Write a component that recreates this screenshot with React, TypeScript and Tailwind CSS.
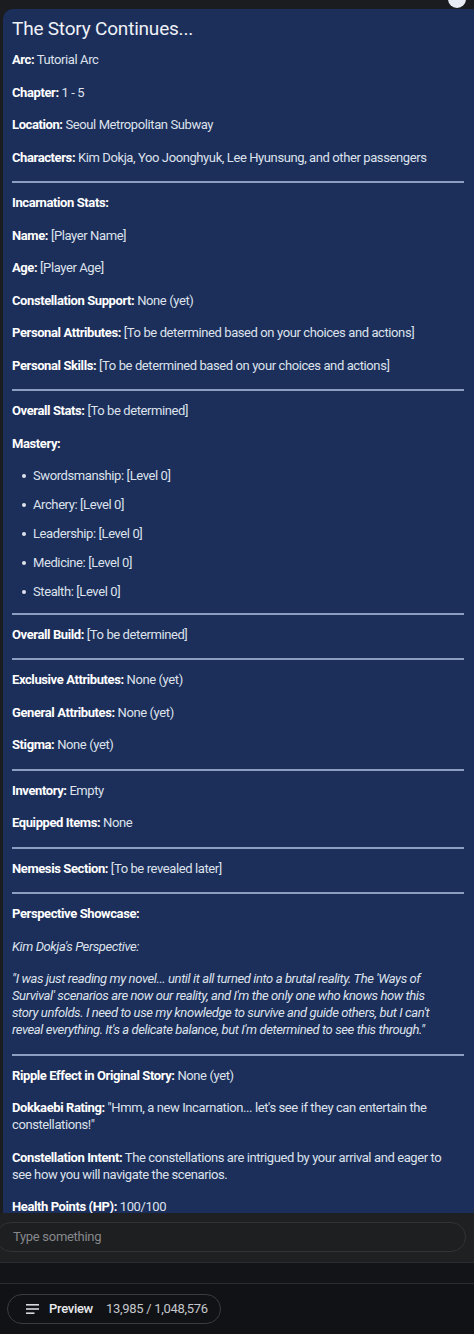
import React from 'react';

type Row =
  | { kind: 'p'; label?: string; text?: string }
  | { kind: 'hr' }
  | { kind: 'list'; items: string[] }
  | { kind: 'em'; text: string };

const rows: Row[] = [
  { kind: 'p', label: 'Arc:', text: 'Tutorial Arc' },
  { kind: 'p', label: 'Chapter:', text: '1 - 5' },
  { kind: 'p', label: 'Location:', text: 'Seoul Metropolitan Subway' },
  { kind: 'p', label: 'Characters:', text: 'Kim Dokja, Yoo Joonghyuk, Lee Hyunsung, and other passengers' },
  { kind: 'hr' },
  { kind: 'p', label: 'Incarnation Stats:' },
  { kind: 'p', label: 'Name:', text: '[Player Name]' },
  { kind: 'p', label: 'Age:', text: '[Player Age]' },
  { kind: 'p', label: 'Constellation Support:', text: 'None (yet)' },
  { kind: 'p', label: 'Personal Attributes:', text: '[To be determined based on your choices and actions]' },
  { kind: 'p', label: 'Personal Skills:', text: '[To be determined based on your choices and actions]' },
  { kind: 'hr' },
  { kind: 'p', label: 'Overall Stats:', text: '[To be determined]' },
  { kind: 'p', label: 'Mastery:' },
  {
    kind: 'list',
    items: [
      'Swordsmanship: [Level 0]',
      'Archery: [Level 0]',
      'Leadership: [Level 0]',
      'Medicine: [Level 0]',
      'Stealth: [Level 0]',
    ],
  },
  { kind: 'hr' },
  { kind: 'p', label: 'Overall Build:', text: '[To be determined]' },
  { kind: 'hr' },
  { kind: 'p', label: 'Exclusive Attributes:', text: 'None (yet)' },
  { kind: 'p', label: 'General Attributes:', text: 'None (yet)' },
  { kind: 'p', label: 'Stigma:', text: 'None (yet)' },
  { kind: 'hr' },
  { kind: 'p', label: 'Inventory:', text: 'Empty' },
  { kind: 'p', label: 'Equipped Items:', text: 'None' },
  { kind: 'hr' },
  { kind: 'p', label: 'Nemesis Section:', text: '[To be revealed later]' },
  { kind: 'hr' },
  { kind: 'p', label: 'Perspective Showcase:' },
  { kind: 'em', text: "Kim Dokja's Perspective:" },
  {
    kind: 'em',
    text: "\"I was just reading my novel... until it all turned into a brutal reality. The 'Ways of Survival' scenarios are now our reality, and I'm the only one who knows how this story unfolds. I need to use my knowledge to survive and guide others, but I can't reveal everything. It's a delicate balance, but I'm determined to see this through.\"",
  },
  { kind: 'hr' },
  { kind: 'p', label: 'Ripple Effect in Original Story:', text: 'None (yet)' },
  { kind: 'p', label: 'Dokkaebi Rating:', text: '"Hmm, a new Incarnation... let\'s see if they can entertain the constellations!"' },
  { kind: 'p', label: 'Constellation Intent:', text: 'The constellations are intrigued by your arrival and eager to see how you will navigate the scenarios.' },
  { kind: 'p', label: 'Health Points (HP):', text: '100/100' },
];

function Block({ row }: { row: Row }) {
  if (row.kind === 'hr') {
    return <hr className="border-0 h-[2px] bg-[#8c9fc2] mb-[11px] mr-[-12px]" />;
  }
  if (row.kind === 'list') {
    return (
      <ul className="flex flex-col gap-[12px] pl-[10px] mb-[12.5px]">
        {row.items.map((it) => (
          <li key={it} className="flex items-center gap-[7px]">
            <span className="w-[4px] h-[4px] rounded-full bg-[#dfe3ec]" />
            <span>{it}</span>
          </li>
        ))}
      </ul>
    );
  }
  if (row.kind === 'em') {
    return <p className="italic mb-[15.5px]">{row.text}</p>;
  }
  return (
    <p className="mb-[15.5px]">
      {row.label && <strong className="font-bold text-white">{row.label}</strong>}
      {row.text && <> {row.text}</>}
    </p>
  );
}

export default function App() {
  return (
    <div
      className="relative w-[474px] h-[1334px] overflow-hidden bg-[#1b1c1f] flex flex-col"
      style={{ fontFamily: 'Roboto, "Liberation Sans", sans-serif' }}
    >
      <div className="absolute top-[-10px] right-[8px] w-[18px] h-[18px] rounded-full bg-[#e8ecf5]" />

      <div className="h-[9px] shrink-0" />

      <div className="h-[1204px] shrink-0 overflow-hidden pl-[3px]">
        <div className="bg-[#1c2e5a] rounded-t-[10px] mr-[-8px] pl-[9px] pr-[30px] pt-[8px] pb-8 text-[13px] leading-[17px] tracking-[-0.4px] text-[#dde2ec]">
          <h1 className="text-[19px] leading-[24px] tracking-[-0.2px] text-[#eef1f7] mb-[10px]">The Story Continues...</h1>
          {rows.map((r, i) => (
            <Block key={i} row={r} />
          ))}
        </div>
      </div>

      <div className="h-[49px] shrink-0 bg-[#1f2022] pt-[9px] pr-[8px]">
        <div className="h-[30px] rounded-full border border-[#323336] bg-[#1e1f21] ml-[-4px] flex items-center pl-[16px] text-[13px] tracking-[-0.3px] text-[#86888c] whitespace-nowrap">
          Type something
        </div>
      </div>

      <div className="h-[21px] shrink-0 bg-[#131417] border-t border-[#2a2b2e]" />

      <div className="flex-1 bg-[#111215] border-t border-[#2c2d30] pt-[10px] pl-[7px]">
        <div className="flex items-center h-[30px] w-[214px] rounded-full border border-[#3b3c40] pl-[18px] whitespace-nowrap">
          <svg width="13" height="10" viewBox="0 0 13 10" className="mr-[10px] shrink-0">
            <rect x="0" y="0" width="13" height="1.6" fill="#d6d8dc" />
            <rect x="0" y="4.2" width="13" height="1.6" fill="#d6d8dc" />
            <rect x="0" y="8.4" width="8.5" height="1.6" fill="#d6d8dc" />
          </svg>
          <span className="text-[13px] tracking-[-0.3px] font-medium text-[#e8eaed] mr-[13px]">Preview</span>
          <span className="text-[13px] tracking-[-0.3px] text-[#c4c7cc]">13,985 / 1,048,576</span>
        </div>
      </div>
    </div>
  );
}
